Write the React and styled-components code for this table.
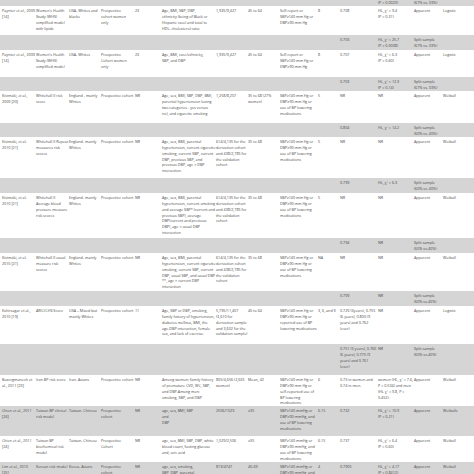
import styled, { createGlobalStyle } from "styled-components";

const GlobalStyle = createGlobalStyle`
  html, body {
    margin: 0;
    padding: 0;
    background: #ffffff;
    overflow: hidden;
  }
`;

const Page = styled.div`
  width: 474px;
  height: 474px;
  overflow: hidden;
  background: #fff;
`;

/* the table is laid out at double size and drawn at half, so the tiny text keeps its proportions */
const Sheet = styled.div`
  display: flow-root;
  width: 948px;
  transform: scale(0.5);
  transform-origin: 0 0;
`;

const Table = styled.table`
  width: 948px;
  margin-top: -16px;
  border-collapse: collapse;
  table-layout: fixed;
  font-family: "Open Sans", "DejaVu Sans", sans-serif;
  font-size: 7.4px;
  line-height: 11.6px;
  color: #474747;
`;

const Row = styled.tr`
  height: ${(p) => p.h * 2}px;
  background: ${(p) => (p.shade ? "#d5d5d5" : "#ffffff")};
`;

const Cell = styled.td`
  vertical-align: top;
  padding: 4px 1px 0 ${(p) => (p.first ? 4 : 0)}px;
  white-space: pre-line;
`;

const widths = [36, 33, 32, 34, 27, 54, 32, 32, 38, 22, 38, 36, 29, 31];

const HL = (chi, p) => `HL, χ² = ${chi}\n(P = ${p})`;

const rows = [
  { h: 14, shade: true, c: ["", "", "", "", "", "", "", "", "", "", "0.705", "HL, χ² = 28.1\n(P = 0.0023)", "Split sample\n(67% vs. 33%)", ""] },
  { h: 29, c: ["Paynter et al., 2009 [14]", "Women's Health Study (WHS) simplified model with lipids", "USA- Whites and blacks", "Prospective\ncohort women\nonly", "23", "Age, BMI, SBP, DBP,\nethnicity (being of Black or Hispanic race) and total to HDL- cholesterol ratio", "1,935/9,427", "45 to 64", "Self-report or SBP≥140 mm Hg or DBP≥90 mm Hg", "8", "0.708", HL("9.4", "0.31"), "Apparent", "Logistic"] },
  { h: 15, shade: true, c: ["", "", "", "", "", "", "", "", "", "", "0.703", HL("25.7", "0.0008"), "Split sample\n(67% vs. 33%)", ""] },
  { h: 27, c: ["Paynter et al., 2009 [14]", "Women's Health Study (WHS) simplified model", "USA- Whites", "Prospective\nCohort women\nonly", "23", "Age, BMI, race/ethnicity,\nSBP, and DBP", "1,935/9,427", "45 to 64", "Self-report or SBP≥140 mm Hg or DBP≥90 mm Hg", "8", "0.707", HL("6.3", "0.60"), "Apparent", "Logistic"] },
  { h: 14, shade: true, c: ["", "", "", "", "", "", "", "", "", "", "0.703", HL("12.3", "0.14"), "Split sample\n(67% vs. 33%)", ""] },
  { h: 32, c: ["Kivimäki, et al., 2009 [20]", "Whitehall II risk score", "England - mainly Whites", "Prospective cohort", "NR", "Age, sex, BMI, SBP, DBP, BMI, parental hypertension (using two categories - yes versus no), and cigarette smoking", "1,258/8,207", "35 to 68 (27% women)", "SBP≥140 mm Hg or DBP≥90 mm Hg or use of BP lowering medications", "5", "NR", "NR", "Apparent", "Weibull"] },
  { h: 14, shade: true, c: ["", "", "", "", "", "", "", "", "", "", "0.804", "HL, χ² = 14.2", "Split sample\n(60% vs. 40%)", ""] },
  { h: 41, c: ["Kivimäki, et al. 2010 [21]", "Whitehall II Repeat measures risk scores", "England- mainly Whites", "Prospective cohort", "NR", "Age, sex, BMI, parental hypertension, current cigarette smoking, current SBP, current DBP, previous SBP, and previous DBP, age × DBP interaction.", "614/4,135 for the derivation cohort and 438/2,785 for the validation cohort", "35 to 68", "SBP≥140 mm Hg or DBP≥90 mm Hg or use of BP lowering medications", "5", "NR", "NR", "Apparent", "Weibull"] },
  { h: 15, shade: true, c: ["", "", "", "", "", "", "", "", "", "", "0.799", "HL, χ² = 6.3", "Split sample\n(60% vs. 40%)", ""] },
  { h: 45, c: ["Kivimäki, et al. 2010 [21]", "Whitehall II Average blood pressure measure risk scores", "England- mainly Whites", "Prospective cohort", "NR", "Age, sex, BMI, parental hypertension, current smoking and average SBP* (current and previous SBP), average DBP(current and previous DBP), age × usual DBP interaction", "614/4,135 for the derivation cohort and 438/2,785 for the validation cohort", "35 to 68", "SBP≥140 mm Hg or DBP≥90 mm Hg or use of BP lowering medications", "5", "NR", "NR", "Apparent", "Weibull"] },
  { h: 15, shade: true, c: ["", "", "", "", "", "", "", "", "", "", "0.794", "NR", "Split sample\n(60% vs.40%)", ""] },
  { h: 38, c: ["Kivimäki, et al. 2010 [21]", "Whitehall II usual measure risk scores", "England- mainly Whites", "Prospective cohort", "NR", "Age, sex, BMI, parental hypertension, current cigarette smoking, current SBP, current DBP, usual SBP, and usual DBP **, age × current DBP interaction", "614/4,135 for the derivation cohort and 438/2,785 for the validation cohort", "35 to 68", "SBP≥140 mm Hg or DBP≥90 mm Hg or use of BP lowering medications", "NA", "NR", "NR", "Apparent", "Weibull"] },
  { h: 15, shade: true, c: ["", "", "", "", "", "", "", "", "", "", "0.799", "NR", "Split sample\n(60% vs.40%)", ""] },
  { h: 38, c: ["Kshirsagar et al., 2010 [19]", "ARIC/CHS Score", "USA – Mixed but mainly Whites", "Prospective cohort", "11", "Age, SBP or DBP, smoking, family history of hypertension, diabetes mellitus, BMI, the age-DBP interaction, female sex, and lack of exercise", "5,795/11,407 (3,610 for derivation sample and 3,602 for the validation sample)", "40 to 64", "SBP≥140 mm Hg or DBP≥90 mm Hg or reported use of BP lowering medications", "3, 6, and 9", "0.729 (3years), 0.755 (6 years), 0.800 (9 years) and 0.762 (ever)", "NR", "Apparent", "Logistic"] },
  { h: 31, shade: true, c: ["", "", "", "", "", "", "", "", "", "", "0.751 (3 years), 0.760 (6 years), 0.775 (9 years) and 0.761 (ever)", "NR", "Split sample\n(60% vs.40%)", ""] },
  { h: 28, c: ["Bozorgmanesh et al., 2011 [23]", "Iran BP risk score", "Iran- Asians", "Prospective cohort", "NR", "Among women: family history of premature CVD, WC, SBP, and DBP.Among men: smoking, SBP, and DBP", "805/4,656 (2,635 women)", "Mean, 42", "SBP≥140 mm Hg or DBP≥90 mm Hg or self-reported use of BP lowering medications", "6", "0.73 in women and 0.74 in men.", "women (HL, χ² = 7.6, P = 0.534) and men (HL χ² = 9.8, P = 0.452).", "Apparent", "Weibull"] },
  { h: 30, shade: true, c: ["Chien et al., 2011 [24]", "Taiwan BP clinical risk model", "Taiwan- Chinese", "Prospective\ncohort", "NR", "age, sex, BMI, SBP\nand\nDBP", "2506/1029", "≥35", "SBP≥140 mmHg or DBP≥90 mmHg, and use of BP lowering medications", "6.15", "0.732", HL("10.9", "0.21"), "Apparent", "Weibulls"] },
  { h: 26, c: ["Chien et al., 2011 [24]", "Taiwan BP biochemical risk model", "Taiwan- Chinese", "Prospective\nCohort", "NR", "age, sex, BMI, SBP, DBP, white blood count, fasting glucose and, uric acid", "1,029/2,506", "≥35", "SBP≥140 mmHg or DBP≥90 mmHg, and use of BP lowering medications", "6.15", "0.737", HL("6.4", "0.60"), "Apparent", "Weibull"] },
  { h: 30, shade: true, c: ["Lim et al., 2013 [25]", "Korean risk model", "Korea- Asians", "Prospective\ncohort", "NR", "age, sex, smoking,\nSBP, DBP, parental hypertension", "819/4747", "40-69", "SBP≥140 mmHg or DBP≥90 mmHg, and use of BP lowering medications", "4", "0.7905", HL("4.17", "0.8412"), "Apparent", "Weibull"] },
];

export default function App() {
  return (
    <Page>
      <GlobalStyle />
      <Sheet>
        <Table>
          <colgroup>
            {widths.map((w, i) => (
              <col key={i} style={{ width: w * 2 }} />
            ))}
          </colgroup>
          <tbody>
            {rows.map((r, i) => (
              <Row key={i} h={r.h} shade={r.shade}>
                {r.c.map((t, j) => (
                  <Cell key={j} first={j === 0}>
                    {t}
                  </Cell>
                ))}
              </Row>
            ))}
          </tbody>
        </Table>
      </Sheet>
    </Page>
  );
}
